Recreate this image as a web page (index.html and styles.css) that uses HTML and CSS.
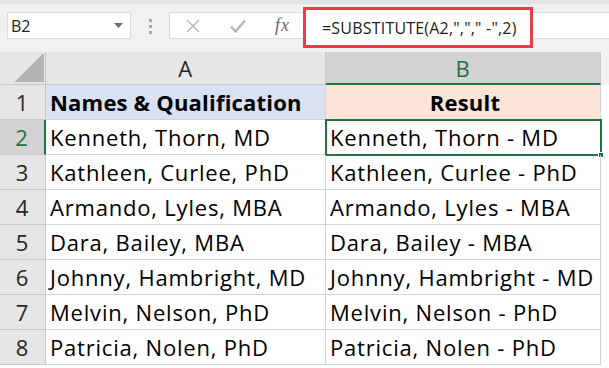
FILE: index.html
```html
<!DOCTYPE html>
<html lang="en">
<head>
    <meta charset="UTF-8">
    <title>SUBSTITUTE example</title>
    <link rel="stylesheet" href="styles.css">
</head>
<body>
    <div class="toolbar">
        <div class="name-box">
            <span>B2</span>
            <svg class="caret" width="9" height="5" viewBox="0 0 9 5"><path d="M0 0h9L4.5 5z" fill="#6b6b6b"/></svg>
        </div>
        <div class="grip"><i></i><i></i><i></i></div>
        <div class="formula-bar">
            <div class="fx-buttons">
                <svg width="14" height="14" viewBox="0 0 14 14"><path d="M1 1l12 12M13 1L1 13" stroke="#b5b5b5" stroke-width="1.4" fill="none"/></svg>
                <svg width="16" height="14" viewBox="0 0 16 14"><path d="M1 7.5l4.5 5L15 1.5" stroke="#b5b5b5" stroke-width="2.4" fill="none"/></svg>
                <span class="fx">fx</span>
            </div>
            <div class="formula">=SUBSTITUTE(A2,",","&nbsp;-",2)</div>
        </div>
    </div>

    <div class="sheet">
        <div class="corner"></div>
        <div class="col-head">A</div>
        <div class="col-head active">B</div>
        <div class="filler head"></div>

        <div class="row-head">1</div>
        <div class="cell title qual">Names &amp; Qualification</div>
        <div class="cell title res">Result</div>
        <div class="filler"></div>

        <div class="row-head active">2</div>
        <div class="cell">Kenneth, Thorn, MD</div>
        <div class="cell selected">Kenneth, Thorn - MD<span class="handle"></span></div>
        <div class="filler"></div>

        <div class="row-head">3</div>
        <div class="cell">Kathleen, Curlee, PhD</div>
        <div class="cell">Kathleen, Curlee - PhD</div>
        <div class="filler"></div>

        <div class="row-head">4</div>
        <div class="cell">Armando, Lyles, MBA</div>
        <div class="cell">Armando, Lyles - MBA</div>
        <div class="filler"></div>

        <div class="row-head">5</div>
        <div class="cell">Dara, Bailey, MBA</div>
        <div class="cell">Dara, Bailey - MBA</div>
        <div class="filler"></div>

        <div class="row-head">6</div>
        <div class="cell">Johnny, Hambright, MD</div>
        <div class="cell">Johnny, Hambright - MD</div>
        <div class="filler"></div>

        <div class="row-head">7</div>
        <div class="cell">Melvin, Nelson, PhD</div>
        <div class="cell">Melvin, Nelson - PhD</div>
        <div class="filler"></div>

        <div class="row-head">8</div>
        <div class="cell">Patricia, Nolen, PhD</div>
        <div class="cell">Patricia, Nolen - PhD</div>
        <div class="filler"></div>
    </div>
</body>
</html>
```

FILE: styles.css
```css
* {
    box-sizing: border-box;
}

body {
    margin: 0;
    background-color: #ffffff;
    font-family: "Open Sans", "Liberation Sans", sans-serif;
    color: #000;
    overflow: hidden;
}

.toolbar {
    height: 52px;
    background-color: #f1f1f1;
    border-top: 4px solid #e4e4e4;
    display: flex;
    align-items: flex-start;
    padding-top: 8px;
}

.name-box {
    margin-left: 7px;
    width: 124px;
    height: 27px;
    background: #fff;
    border: 1px solid #dcdcdc;
    display: flex;
    align-items: center;
    justify-content: space-between;
    padding: 0 7px 0 3px;
    font-size: 16px;
    color: #222;
}

.grip {
    width: 38px;
    display: flex;
    flex-direction: column;
    align-items: center;
    gap: 3px;
    padding-top: 7px;
}

.grip i {
    width: 3px;
    height: 3px;
    background: #a8a8a8;
}

.formula-bar {
    flex: 1;
    height: 27px;
    background: #fff;
    border: 1px solid #dcdcdc;
    border-right: none;
    display: flex;
    align-items: center;
}

.fx-buttons {
    width: 133px;
    display: flex;
    align-items: center;
    justify-content: space-between;
    padding: 0 13px 0 16px;
}

.fx {
    font-family: "Liberation Serif", serif;
    font-style: italic;
    font-size: 18px;
    color: #666;
    letter-spacing: 1px;
}

.formula {
    height: 41px;
    width: 230px;
    border: 3px solid #ec3b45;
    display: flex;
    align-items: center;
    padding-left: 16px;
    font-size: 16px;
    letter-spacing: 0.2px;
    color: #222;
    background: #fff;
    position: relative;
    top: 2px;
}

.sheet {
    display: grid;
    grid-template-columns: 46px 280px 275px 1fr;
    grid-template-rows: 33px repeat(8, 35px);
    font-size: 22px;
    letter-spacing: 0.8px;
}

.corner {
    background: #e6e6e6 linear-gradient(135deg, transparent 50%, #b5b5b5 50%) no-repeat;
    background-size: 30px 28px;
    background-position: right 1px bottom 2px;
    border-right: 1px solid #c8c8c8;
    border-bottom: 1px solid #c8c8c8;
}

.col-head {
    background: #e6e6e6;
    border-right: 1px solid #c8c8c8;
    border-bottom: 1px solid #c8c8c8;
    display: flex;
    align-items: center;
    justify-content: center;
    color: #262626;
}

.col-head.active {
    background: #d2d2d2;
    color: #217346;
    border-bottom: 2px solid #217346;
}

.filler {
    background: #fff;
}

.filler.head {
    background: #f1f1f1;
}

.row-head {
    background: #e6e6e6;
    border-right: 1px solid #c8c8c8;
    border-bottom: 1px solid #c8c8c8;
    display: flex;
    align-items: center;
    justify-content: center;
    color: #262626;
}

.row-head.active {
    background: #d2d2d2;
    color: #217346;
    border-right: 2px solid #217346;
}

.cell {
    border-right: 1px solid #d4d4d4;
    border-bottom: 1px solid #d4d4d4;
    display: flex;
    align-items: center;
    padding-left: 4px;
    white-space: nowrap;
    position: relative;
}

.title {
    font-weight: bold;
    letter-spacing: 0.2px;
}

.qual {
    background: #d9e1f2;
}

.res {
    background: #fce4d6;
    justify-content: center;
}

.selected {
    outline: 2px solid #217346;
    outline-offset: -1px;
}

.handle {
    position: absolute;
    right: -4px;
    bottom: -4px;
    width: 6px;
    height: 6px;
    background: #217346;
    border: 1px solid #fff;
}
```
